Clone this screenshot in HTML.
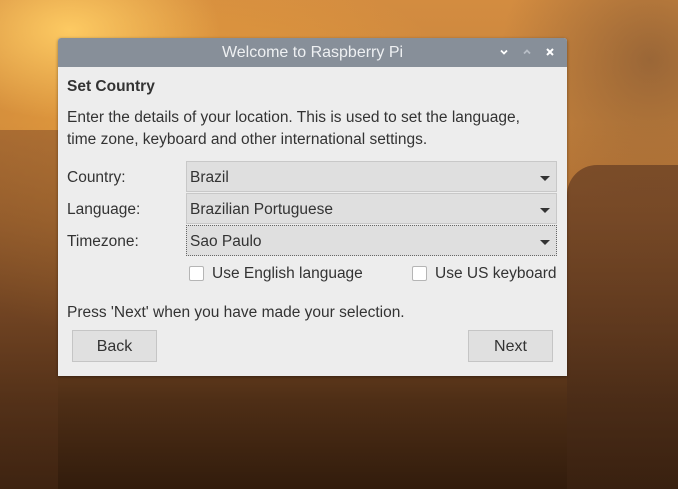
<!DOCTYPE html>
<html><head><style>
*{margin:0;padding:0;box-sizing:border-box}
html,body{width:678px;height:489px;overflow:hidden;background:#321c0c}
body{position:relative;font-family:"Liberation Sans",sans-serif;font-size:15.5px;color:#333}
.bg{position:absolute;left:0;top:0;width:678px;height:489px;background:
radial-gradient(ellipse 200px 120px at 70px 30px,rgba(255,205,100,.95),rgba(255,205,100,0) 75%),
radial-gradient(ellipse 420px 260px at 180px 150px,rgba(240,165,60,.85),rgba(240,165,60,0) 75%),
radial-gradient(ellipse 200px 200px at 650px 60px,rgba(120,80,50,.6),rgba(120,80,50,0) 75%),
linear-gradient(180deg,#d38c40 0%,#c8843c 25%,#a86a32 45%,#7a4a24 65%,#4e2e16 82%,#321c0c 100%);}
.rhill{position:absolute;left:567px;top:165px;width:120px;height:330px;background:linear-gradient(180deg,rgba(100,60,35,.7),rgba(60,35,18,.6));border-radius:30px 0 0 0;}
.lhill{position:absolute;left:0;top:130px;width:58px;height:360px;background:linear-gradient(180deg,rgba(140,85,45,.6),rgba(70,40,20,.6));}
.win{position:absolute;left:58px;top:38px;width:509px;height:338px;background:#ededed;border-radius:3px 3px 0 0;box-shadow:0 1px 3px rgba(0,0,0,.4)}
.tb{height:29px;background:#878f99;border-radius:3px 3px 0 0;color:#eef0f2;text-align:center;line-height:29px;font-size:16px;position:relative}
.tb svg{position:absolute;top:9px}
.abs{position:absolute;white-space:nowrap}
.combo{position:absolute;left:128px;width:371px;height:31px;background:#dfdfdf;border:1px solid #c8c8c8;line-height:31px;padding-left:3px;color:#333}
.combo:after{content:"";position:absolute;right:6px;top:14px;border-left:5px solid transparent;border-right:5px solid transparent;border-top:5px solid #333}
.cb{position:absolute;width:15px;height:15px;background:#fff;border:1px solid #b5b5b5;border-radius:2px}
.btn{position:absolute;top:292px;width:85px;height:32px;background:#e0e0e0;border:1px solid #c5c5c5;text-align:center;line-height:32px;font-size:16px}
</style></head><body>
<div class="bg"></div>
<div class="lhill"></div><div class="rhill"></div>
<div class="win">
<div class="tb">Welcome to Raspberry Pi
<svg style="left:441px" width="10" height="10" viewBox="0 0 10 10"><path d="M2 3.5L5 6.5L8 3.5" stroke="#fff" stroke-width="1.8" fill="none"/></svg>
<svg style="left:464px" width="10" height="10" viewBox="0 0 10 10"><path d="M2 6.5L5 3.5L8 6.5" stroke="#b8bec6" stroke-width="1.8" fill="none"/></svg>
<svg style="left:487px" width="10" height="10" viewBox="0 0 10 10"><path d="M2 2L8 8M8 2L2 8" stroke="#fff" stroke-width="2" fill="none"/></svg>
</div>
<div class="abs" style="left:9px;top:40px;font-weight:bold;font-size:15.5px">Set Country</div>
<div class="abs" style="left:9px;top:69px;line-height:22px">Enter the details of your location. This is used to set the language,<br>time zone, keyboard and other international settings.</div>
<div class="abs" style="left:9px;top:131px">Country:</div>
<div class="abs" style="left:9px;top:163px">Language:</div>
<div class="abs" style="left:9px;top:195px">Timezone:</div>
<div class="combo" style="top:123px">Brazil</div>
<div class="combo" style="top:155px">Brazilian Portuguese</div>
<div class="combo" style="top:187px;border:1px dotted #666">Sao Paulo</div>
<div class="cb" style="left:131px;top:228px"></div>
<div class="abs" style="left:154px;top:227px">Use English language</div>
<div class="cb" style="left:354px;top:228px"></div>
<div class="abs" style="left:377px;top:227px">Use US keyboard</div>
<div class="abs" style="left:9px;top:266px">Press 'Next' when you have made your selection.</div>
<div class="btn" style="left:14px">Back</div>
<div class="btn" style="left:410px">Next</div>
</div>
</body></html>
